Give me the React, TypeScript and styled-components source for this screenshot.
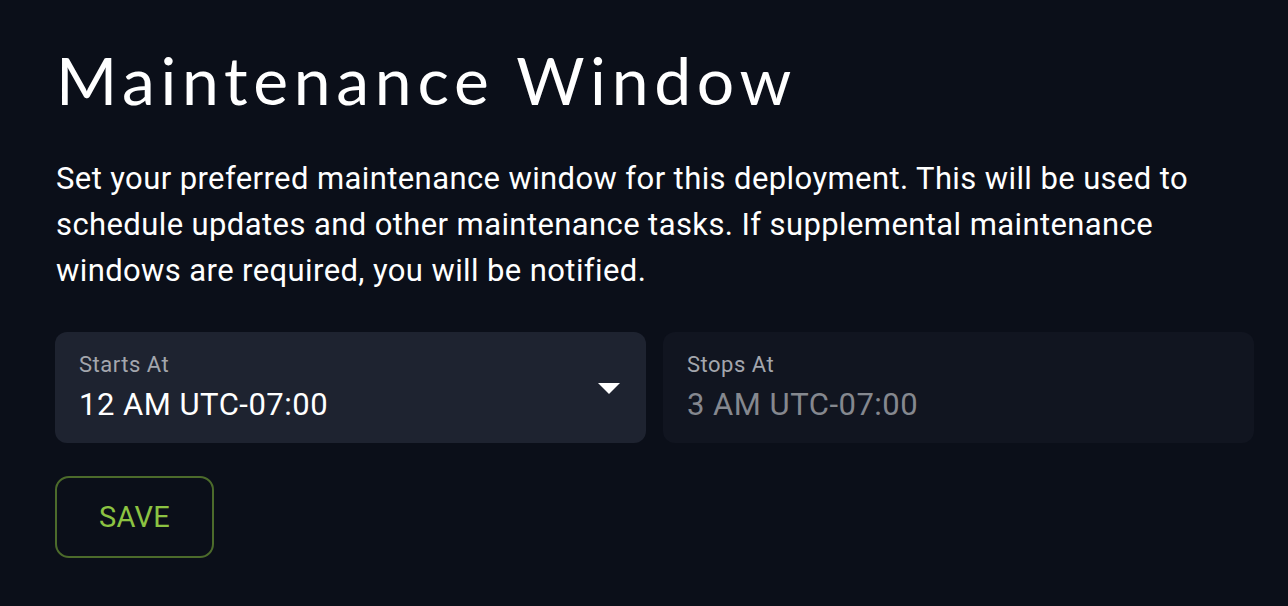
import React from "react";
import styled, { createGlobalStyle } from "styled-components";

const Global = createGlobalStyle`
  html, body { margin: 0; padding: 0; background: #0b0f19; }
  body { font-family: Roboto, "Liberation Sans", sans-serif; }
`;

const Page = styled.div`
  width: 1288px;
  height: 606px;
  box-sizing: border-box;
  padding: 36px 34px 0 56px;
  background: #0b0f19;
  color: #ffffff;
  overflow: hidden;
`;

const Title = styled.h1`
  margin: 0;
  font-family: Lato, "Noto Sans", sans-serif;
  font-weight: 400;
  font-size: 66px;
  line-height: 88px;
  letter-spacing: 5.7px;
  color: #ffffff;
`;

const Description = styled.p`
  margin: 32px 0 0 0;
  font-family: Roboto, sans-serif;
  font-size: 31px;
  line-height: 46px;
  letter-spacing: 0.4px;
  color: #ffffff;
`;

const Fields = styled.div`
  display: grid;
  grid-template-columns: 591px 591px;
  gap: 17px;
  margin: 38px 0 0 -1px;
`;

const Field = styled.div<{ $disabled?: boolean }>`
  position: relative;
  height: 111px;
  box-sizing: border-box;
  padding: 18.5px 24px 0 24px;
  border-radius: 12px;
  background: ${(p) => (p.$disabled ? "#111520" : "#1e2330")};
  display: flex;
  flex-direction: column;
  gap: 6px;
`;

const Label = styled.span`
  font-size: 22px;
  line-height: 28px;
  letter-spacing: 0.5px;
  color: #a3a6ad;
`;

const Value = styled.span<{ $disabled?: boolean }>`
  font-size: 31px;
  line-height: 40px;
  letter-spacing: 0.5px;
  color: ${(p) => (p.$disabled ? "#85888f" : "#ffffff")};
`;

const Caret = styled.svg`
  position: absolute;
  right: 26px;
  top: 51px;
`;

const SaveButton = styled.button`
  margin-top: 33px;
  margin-left: -1px;
  width: 159px;
  height: 82px;
  box-sizing: border-box;
  border: 2px solid #4c6b2b;
  border-radius: 14px;
  background: transparent;
  color: #8cc342;
  font-family: Roboto, sans-serif;
  font-size: 29px;
  letter-spacing: 0.3px;
  cursor: pointer;
`;

export default function App() {
  return (
    <>
      <Global />
      <Page>
        <Title>Maintenance Window</Title>
        <Description>
          Set your preferred maintenance window for this deployment. This will be used to
          schedule updates and other maintenance tasks. If supplemental maintenance
          windows are required, you will be notified.
        </Description>
        <Fields>
          <Field>
            <Label>Starts At</Label>
            <Value>12 AM UTC-07:00</Value>
            <Caret width="22" height="11" viewBox="0 0 22 11">
              <path d="M0 0 L22 0 L11 11 Z" fill="#ffffff" />
            </Caret>
          </Field>
          <Field $disabled>
            <Label>Stops At</Label>
            <Value $disabled>3 AM UTC-07:00</Value>
          </Field>
        </Fields>
        <SaveButton>SAVE</SaveButton>
      </Page>
    </>
  );
}
